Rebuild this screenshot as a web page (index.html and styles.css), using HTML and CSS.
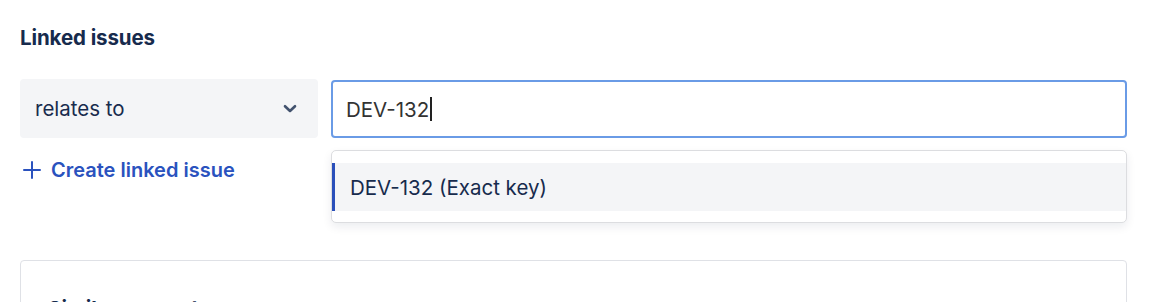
FILE: index.html
```html
<!DOCTYPE html>
<html>
<head>
<meta charset="utf-8">
<link rel="stylesheet" href="styles.css">
</head>
<body>
<div class="page">
  <h2 class="title">Linked issues</h2>
  <div class="row">
    <div class="left">
      <div class="select">
        <span>relates to</span>
        <svg class="chev" width="14" height="10" viewBox="0 0 14 10"><path d="M2 2.2 L7 7 L12 2.2" fill="none" stroke="#42526E" stroke-width="2.6" stroke-linecap="round" stroke-linejoin="round"/></svg>
      </div>
      <a class="create" href="#">
        <svg class="plus" width="18" height="18" viewBox="0 0 18 18"><path d="M9 1 V17 M1 9 H17" stroke="#2A52BE" stroke-width="2" stroke-linecap="round"/></svg>
        <span>Create linked issue</span>
      </a>
    </div>
    <div class="right">
      <div class="input"><span class="val">DEV-132</span><span class="caret"></span></div>
      <div class="menu">
        <div class="item">DEV-132 (Exact key)</div>
      </div>
    </div>
  </div>
  <div class="card">
    <div class="card-title">Similar requests</div>
  </div>
</div>
</body>
</html>
```
FILE: styles.css
```css
* { box-sizing: border-box; }
html, body { margin: 0; padding: 0; background: #fff; overflow: hidden; }
body { font-family: Inter, "Noto Sans", "Liberation Sans", sans-serif; color: #172B4D; }
.page { padding: 25px 29px 0 20px; height: 302px; overflow: hidden; }
.title { margin: 0; font-size: 20.5px; font-weight: 700; line-height: 26px; color: #172B4D; letter-spacing: -0.1px; }
.row { display: flex; gap: 13px; margin-top: 28px; }
.left { width: 298px; flex: none; }
.select { height: 59px; background: #F4F5F7; border-radius: 4px; display: flex; align-items: center; justify-content: space-between; padding: 0 21px 0 15px; font-size: 20.5px; color: #172B4D; }
.chev { display: block; }
.create { display: flex; align-items: center; gap: 10px; margin-top: 20px; margin-left: 3px; color: #2A52BE; text-decoration: none; font-size: 20px; font-weight: 600; }
.plus { display: block; flex: none; }
.right { flex: 1; }
.input { height: 58px; border: 2px solid #6A9BE6; border-radius: 4px; display: flex; align-items: center; padding-left: 13px; font-size: 20.5px; color: #333; margin-top: 1px; }
.caret { width: 1.5px; height: 24px; background: #222; margin-left: 1px; }
.menu { margin-top: 12px; border: 1px solid #DCDDE0; border-radius: 5px; box-shadow: 0 4px 10px rgba(9,30,66,0.08); padding: 12px 0 11px; background: #fff; }
.item { height: 48px; background: #F4F5F7; border-left: 3px solid #2A4FBA; display: flex; align-items: center; padding-left: 15px; font-size: 20.5px; color: #172B4D; }
.card { margin-top: 37px; border: 1px solid #DFE1E6; border-radius: 4px; height: 80px; padding: 35px 27px; }
.card-title { font-size: 20.5px; font-weight: 700; color: #172B4D; }
```
